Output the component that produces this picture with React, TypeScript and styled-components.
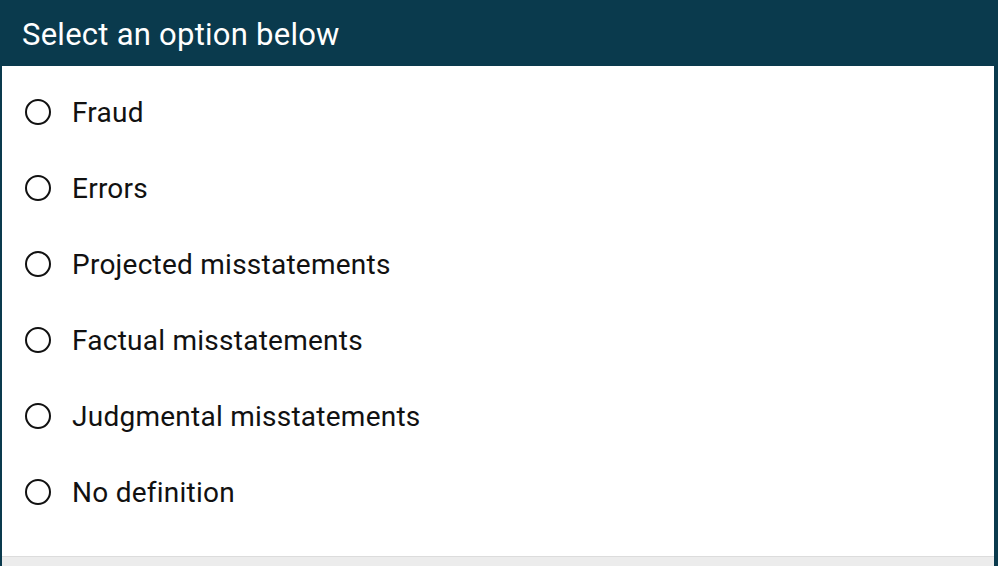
import React from 'react';
import styled, { createGlobalStyle } from 'styled-components';

const GlobalStyle = createGlobalStyle`
  html, body {
    margin: 0;
    padding: 0;
    background: #ffffff;
  }
  body {
    font-family: Roboto, "Liberation Sans", sans-serif;
  }
`;

const Panel = styled.div`
  width: 998px;
  height: 566px;
  display: flex;
  flex-direction: column;
  overflow: hidden;
`;

const Header = styled.div`
  height: 66px;
  flex: 0 0 66px;
  background: #0a3a4d;
  color: #ffffff;
  display: flex;
  align-items: center;
  padding: 2px 0 0 22px;
  box-sizing: border-box;
  font-size: 31px;
  font-weight: 400;
  letter-spacing: 0.25px;
`;

const Body = styled.div`
  flex: 1;
  display: flex;
  flex-direction: column;
  border-left: 2px solid #0a3a4d;
  border-right: 4px solid #0a3a4d;
`;

const OptionList = styled.div`
  display: flex;
  flex-direction: column;
  padding: 8px 0 26px 23px;
  background: #ffffff;
`;

const Option = styled.label`
  height: 76px;
  display: flex;
  align-items: center;
  gap: 21px;
  cursor: pointer;
`;

const Radio = styled.span<{ checked?: boolean }>`
  box-sizing: border-box;
  width: 26px;
  height: 26px;
  border-radius: 50%;
  border: 2px solid #111111;
  background: ${p => (p.checked ? '#111111' : '#ffffff')};
  flex: 0 0 26px;
`;

const Label = styled.span`
  font-size: 28px;
  letter-spacing: 0.25px;
  color: #111111;
`;

const Footer = styled.div`
  flex: 1;
  background: #ececec;
  border-top: 1px solid #dcdcdc;
`;

const options = [
  'Fraud',
  'Errors',
  'Projected misstatements',
  'Factual misstatements',
  'Judgmental misstatements',
  'No definition',
];

export default function App() {
  return (
    <>
      <GlobalStyle />
      <Panel>
        <Header>Select an option below</Header>
        <Body>
          <OptionList>
            {options.map(o => (
              <Option key={o}>
                <Radio />
                <Label>{o}</Label>
              </Option>
            ))}
          </OptionList>
          <Footer />
        </Body>
      </Panel>
    </>
  );
}
